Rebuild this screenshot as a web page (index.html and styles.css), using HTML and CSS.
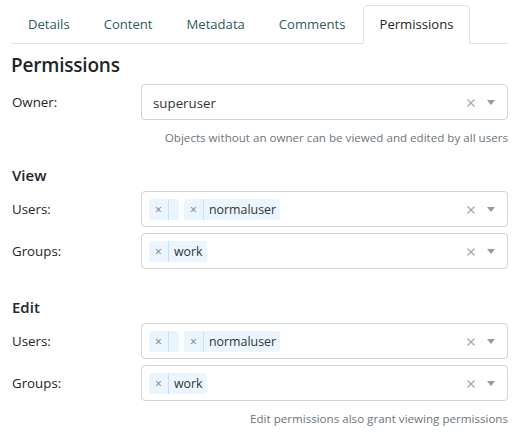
FILE: index.html
```html
<!DOCTYPE html>
<html lang="en">
<head>
<meta charset="utf-8">
<title>Permissions</title>
<link rel="stylesheet" href="styles.css">
</head>
<body>
<div class="page">
  <ul class="tabs">
    <li class="tab">Details</li>
    <li class="tab">Content</li>
    <li class="tab">Metadata</li>
    <li class="tab">Comments</li>
    <li class="tab active">Permissions</li>
  </ul>

  <h2 class="title">Permissions</h2>

  <div class="field">
    <label class="label">Owner:</label>
    <div class="select">
      <div class="value"><span class="single">superuser</span></div>
      <div class="indicators">
        <svg class="clear" width="8" height="8" viewBox="0 0 8 8"><path d="M0.5 0.5L7.5 7.5M7.5 0.5L0.5 7.5"/></svg>
        <span class="caret"></span>
      </div>
    </div>
  </div>
  <p class="help">Objects without an owner can be viewed and edited by all users</p>

  <h3 class="section first">View</h3>
  <div class="field">
    <label class="label">Users:</label>
    <div class="select">
      <div class="value">
        <span class="tag"><span class="tag-x">×</span><span class="tag-label"></span></span>
        <span class="tag"><span class="tag-x">×</span><span class="tag-label">normaluser</span></span>
      </div>
      <div class="indicators">
        <svg class="clear" width="8" height="8" viewBox="0 0 8 8"><path d="M0.5 0.5L7.5 7.5M7.5 0.5L0.5 7.5"/></svg>
        <span class="caret"></span>
      </div>
    </div>
  </div>
  <div class="field">
    <label class="label">Groups:</label>
    <div class="select">
      <div class="value">
        <span class="tag"><span class="tag-x">×</span><span class="tag-label">work</span></span>
      </div>
      <div class="indicators">
        <svg class="clear" width="8" height="8" viewBox="0 0 8 8"><path d="M0.5 0.5L7.5 7.5M7.5 0.5L0.5 7.5"/></svg>
        <span class="caret"></span>
      </div>
    </div>
  </div>

  <h3 class="section">Edit</h3>
  <div class="field">
    <label class="label">Users:</label>
    <div class="select">
      <div class="value">
        <span class="tag"><span class="tag-x">×</span><span class="tag-label"></span></span>
        <span class="tag"><span class="tag-x">×</span><span class="tag-label">normaluser</span></span>
      </div>
      <div class="indicators">
        <svg class="clear" width="8" height="8" viewBox="0 0 8 8"><path d="M0.5 0.5L7.5 7.5M7.5 0.5L0.5 7.5"/></svg>
        <span class="caret"></span>
      </div>
    </div>
  </div>
  <div class="field">
    <label class="label">Groups:</label>
    <div class="select">
      <div class="value">
        <span class="tag"><span class="tag-x">×</span><span class="tag-label">work</span></span>
      </div>
      <div class="indicators">
        <svg class="clear" width="8" height="8" viewBox="0 0 8 8"><path d="M0.5 0.5L7.5 7.5M7.5 0.5L0.5 7.5"/></svg>
        <span class="caret"></span>
      </div>
    </div>
  </div>
  <p class="help">Edit permissions also grant viewing permissions</p>
</div>
</body>
</html>
```

FILE: styles.css
```css
body {
  margin: 0;
  font-family: "Open Sans", "Noto Sans", "Liberation Sans", sans-serif;
  color: #212529;
  background: #fff;
}

.page {
  width: 497px;
  margin: 5px 0 0 11px;
}

.tabs {
  display: flex;
  list-style: none;
  margin: 0;
  padding: 0;
  border-bottom: 1px solid #dee2e6;
}

.tab {
  padding: 8px 16px;
  border: 1px solid transparent;
  border-radius: 5px 5px 0 0;
  margin-bottom: -1px;
  font-size: 13.1px;
  line-height: 21px;
  color: #2f5a60;
}

.tab.active {
  color: #212529;
  background: #fff;
  border-color: #dee2e6 #dee2e6 #fff;
}

.title {
  margin: 9px 0 7px;
  font-size: 19px;
  line-height: 24px;
  font-weight: 600;
  letter-spacing: -0.2px;
}

.field {
  display: grid;
  grid-template-columns: 130px 1fr;
  align-items: center;
}

.field + .field {
  margin-top: 6px;
}

.label {
  padding-left: 1px;
  font-size: 13.3px;
  color: #212529;
}

.select {
  display: flex;
  align-items: center;
  box-sizing: border-box;
  height: 36px;
  border: 1px solid #ced4da;
  border-radius: 4px;
  padding: 1px 12px 0 7px;
}

.value {
  flex: 1;
  display: flex;
  align-items: center;
  gap: 5px;
}

.single {
  padding-left: 4px;
  font-size: 13.3px;
  color: #333;
}

.tag {
  display: flex;
  align-items: stretch;
  height: 21px;
  background: #ebf5ff;
  border-radius: 2px;
  font-size: 12.4px;
  line-height: 21px;
  color: #333;
}

.tag-x {
  width: 19px;
  text-align: center;
  border-right: 1px solid #c2e0ff;
  font-size: 12px;
  color: #777;
}

.tag-label {
  padding: 0 4px 0 5px;
  min-width: 1px;
}

.indicators {
  display: flex;
  align-items: center;
  gap: 12px;
}

.clear path {
  stroke: #a6a6a6;
  stroke-width: 1.2;
  fill: none;
}

.caret {
  width: 0;
  height: 0;
  border-left: 4.5px solid transparent;
  border-right: 4.5px solid transparent;
  border-top: 5px solid #999;
}

.help {
  margin: 9px 0 0;
  text-align: right;
  font-size: 11.6px;
  line-height: 18px;
  color: #6c757d;
}

.section {
  margin: 27px 0 5px 1px;
  font-size: 15px;
  line-height: 22px;
  font-weight: 600;
}

.section.first {
  margin-top: 17px;
}
```
